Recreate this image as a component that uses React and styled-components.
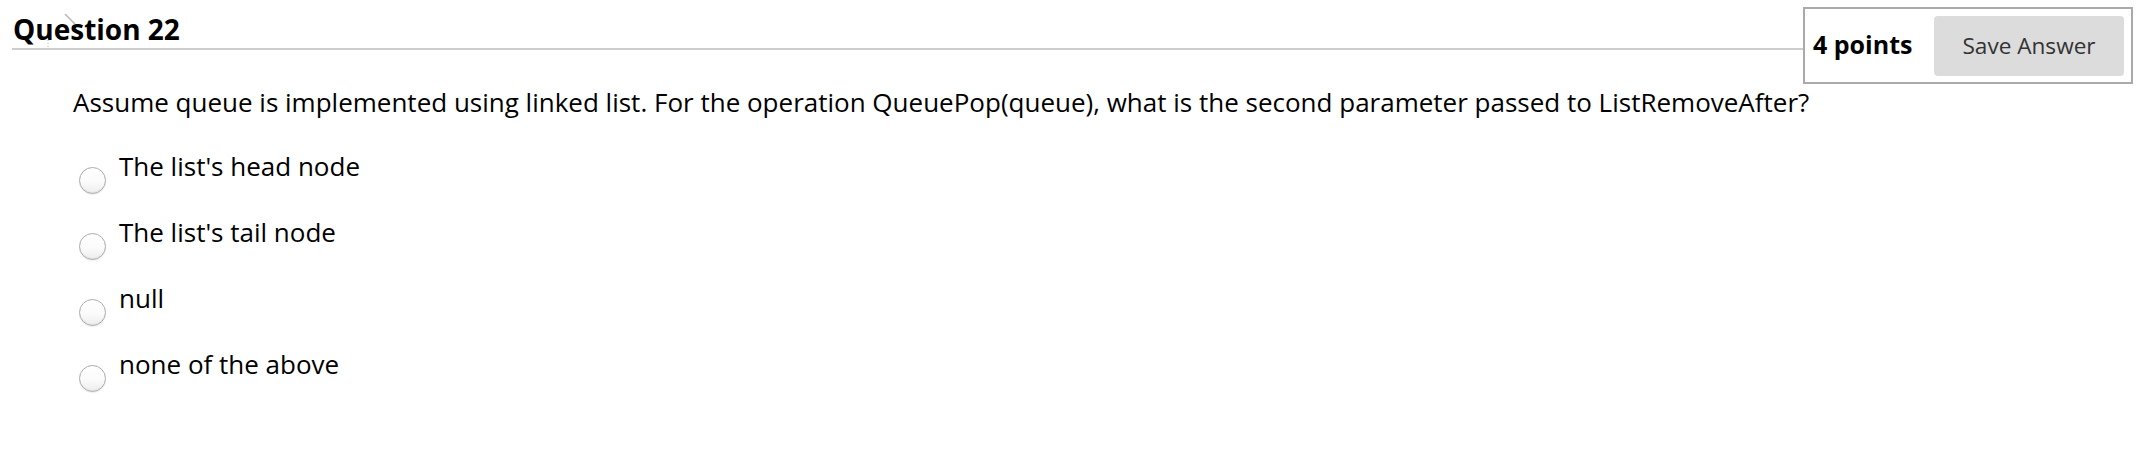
import React from "react";
import styled, { createGlobalStyle } from "styled-components";

const Global = createGlobalStyle`
  html, body { margin: 0; padding: 0; background: #fff; }
  body { font-family: "Open Sans", "Liberation Sans", sans-serif; color: #000; }
`;

const Page = styled.div`
  width: 2152px;
  height: 456px;
  box-sizing: border-box;
  padding: 0 19px 0 12px;
  background: #fff;
`;

const Header = styled.div`
  display: flex;
  align-items: flex-start;
`;

const TitleBar = styled.div`
  position: relative;
  flex: 1;
  padding-top: 10px;
  border-bottom: 2px solid #cdcdcd;
`;

const Title = styled.h3`
  margin: 0;
  padding-left: 1px;
  font-size: 28px;
  font-weight: 700;
  line-height: 38px;
`;

const Mark = styled.svg`
  position: absolute;
  left: 20px;
  top: 10px;
  pointer-events: none;
`;

const PointsBox = styled.div`
  margin-top: 7px;
  width: 330px;
  height: 77px;
  box-sizing: border-box;
  border: 2px solid #aaaaaa;
  display: flex;
  align-items: center;
  padding: 0 7px 0 8px;
`;

const Points = styled.span`
  font-size: 25px;
  font-weight: 700;
  line-height: 34px;
  margin-top: -4px;
  white-space: nowrap;
`;

const SaveButton = styled.button`
  margin-left: auto;
  width: 190px;
  height: 60px;
  border: none;
  border-radius: 4px;
  background: #dcdcdc;
  color: #333;
  font-family: "Open Sans", "Liberation Sans", sans-serif;
  font-size: 22.6px;
  line-height: 30px;
  padding: 0;
  cursor: pointer;
`;

const Body = styled.div`
  padding-left: 61px;
`;

const Prompt = styled.p`
  margin: 1px 0 0;
  font-size: 26px;
  line-height: 35px;
`;

const Options = styled.ul`
  list-style: none;
  margin: 29px 0 0;
  padding: 0;
  display: flex;
  flex-direction: column;
  gap: 31px;
`;

const Option = styled.li`
  display: flex;
  align-items: flex-start;
  height: 35px;
`;

const Radio = styled.span`
  flex: none;
  width: 27px;
  height: 27px;
  box-sizing: border-box;
  margin: 18px 0 0 6px;
  border-radius: 50%;
  border: 1px solid #ababab;
  background: linear-gradient(#ffffff 0%, #fbfbfb 55%, #ededed 100%);
  box-shadow: inset 0 -1px 1px rgba(0, 0, 0, 0.05), 0 1px 1px rgba(0, 0, 0, 0.07);
`;

const Label = styled.label`
  margin-left: 13px;
  font-size: 26px;
  line-height: 35px;
`;

const options = [
  "The list's head node",
  "The list's tail node",
  "null",
  "none of the above",
];

export default function App() {
  return (
    <Page>
      <Global />
      <Header>
        <TitleBar>
          <Title>Question 22</Title>
          <Mark width="50" height="40" viewBox="0 0 50 40">
            <line x1="33" y1="4" x2="43" y2="14" stroke="#9a9a9a" strokeWidth="1.5" opacity="0.7" />
            <line x1="16" y1="30" x2="16" y2="38" stroke="#b0b0b0" strokeWidth="1" strokeDasharray="1 2" />
          </Mark>
        </TitleBar>
        <PointsBox>
          <Points>4 points</Points>
          <SaveButton>Save Answer</SaveButton>
        </PointsBox>
      </Header>
      <Body>
        <Prompt>
          Assume queue is implemented using linked list. For the operation QueuePop(queue), what is the second parameter passed to ListRemoveAfter?
        </Prompt>
        <Options>
          {options.map((o) => (
            <Option key={o}>
              <Radio />
              <Label>{o}</Label>
            </Option>
          ))}
        </Options>
      </Body>
    </Page>
  );
}
